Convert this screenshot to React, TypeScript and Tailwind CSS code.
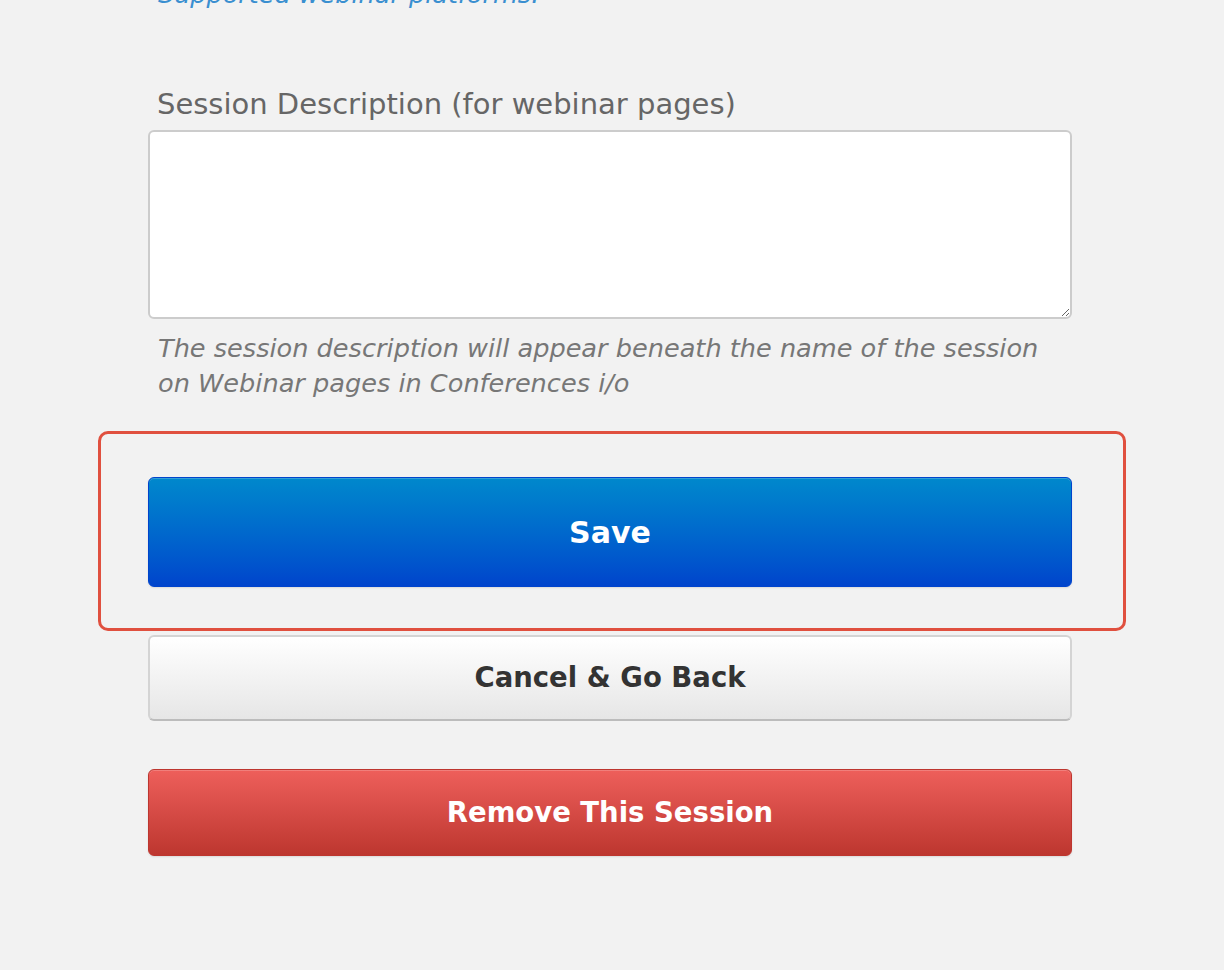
import React from "react";

export default function App() {
  return (
    <div className="min-h-[970px] bg-[#f2f2f2] overflow-hidden font-['DejaVu_Sans',sans-serif]">
      <div className="ml-[148px] w-[924px]">
        <p className="-mt-[23px] pl-[10px] text-[25.5px] leading-[35px] italic text-[#3a8fd0]">
          Supported webinar platforms.
        </p>

        <label className="block mt-[72px] pl-[9px] text-[29px] leading-[40px] text-[#666666]">
          Session Description (for webinar pages)
        </label>
        <textarea className="block mt-[6px] w-full h-[189px] bg-white border-2 border-[#cccccc] rounded-[6px] p-2 outline-none" />
        <p className="mt-[12px] pl-[10px] text-[25.6px] leading-[35px] italic text-[#777777]">
          The session description will appear beneath the name of the session
          <br />
          on Webinar pages in Conferences i/o
        </p>

        <div className="mt-[30px] -ml-[50px] -mr-[54px] border-[3px] border-[#e0503f] rounded-[10px] pl-[47px] pr-[51px] pt-[43px] pb-[41px]">
          <button className="w-full h-[110px] rounded-[6px] border border-[#0044cc] bg-linear-to-b from-[#0088cc] to-[#0044cc] text-white text-[30px] font-bold shadow-[inset_0_1px_0_rgba(255,255,255,0.2),0_1px_2px_rgba(0,0,0,0.1)]">
            Save
          </button>
        </div>

        <button className="block mt-[4px] w-full h-[86px] rounded-[6px] border-2 border-[#d4d4d4] border-b-[#bcbcbc] bg-linear-to-b from-white to-[#e6e6e6] text-[#333333] text-[27.5px] font-bold">
          Cancel &amp; Go Back
        </button>

        <button className="block mt-[48px] w-full h-[87px] rounded-[6px] border border-[#bd362f] bg-linear-to-b from-[#ee5f5b] to-[#bd362f] text-white text-[27.5px] font-bold shadow-[inset_0_1px_0_rgba(255,255,255,0.2),0_1px_2px_rgba(0,0,0,0.1)]">
          Remove This Session
        </button>
      </div>
    </div>
  );
}
